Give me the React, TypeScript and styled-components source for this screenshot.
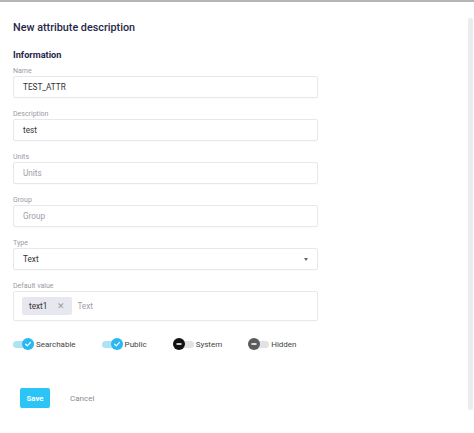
import { FC } from 'react';
import styled, { createGlobalStyle } from 'styled-components';

const GlobalStyle = createGlobalStyle`
  html, body {
    margin: 0;
    padding: 0;
    background: #fff;
    font-family: Roboto, 'Liberation Sans', sans-serif;
  }
`;

const Page = styled.div({
  position: 'relative',
  width: 474,
  height: 433,
  borderTop: '2px solid #b4b4b4',
  boxSizing: 'border-box',
  overflow: 'hidden',
});

const ScrollThumb = styled.div({
  position: 'absolute',
  right: 1,
  top: 16,
  width: 5,
  height: 392,
  borderRadius: 2,
  background: '#ececf0',
});

const Content = styled.div({
  padding: '19px 13px 0',
  width: 305,
});

const Title = styled.h1({
  margin: 0,
  fontSize: 10.8,
  lineHeight: '14px',
  fontWeight: 500,
  color: '#27274a',
});

const SectionTitle = styled.h2({
  margin: '14px 0 5px',
  fontSize: 9.2,
  lineHeight: '12px',
  fontWeight: 700,
  color: '#27274a',
});

const Field = styled.div({
  display: 'flex',
  flexDirection: 'column',
  marginBottom: 11,
});

const Label = styled.span({
  fontSize: 7,
  lineHeight: '10px',
  color: '#9a9aa2',
});

const Box = styled.div<{ $tall?: boolean }>(({ $tall }) => ({
  display: 'flex',
  alignItems: 'center',
  height: $tall ? 30 : 22,
  boxSizing: 'border-box',
  border: '1px solid #e8e8ec',
  borderRadius: 2,
  padding: $tall ? '0 8px' : '0 9px',
  gap: 5,
  fontSize: 8.2,
  color: '#333',
  boxShadow: '0 1px 1px rgba(0,0,0,0.02)',
}));

const Value = styled.span<{ $placeholder?: boolean }>(({ $placeholder }) => ({
  flex: 1,
  color: $placeholder ? '#9e9ea6' : '#333',
}));

const Caret = styled.span({
  width: 0,
  height: 0,
  borderLeft: '2.5px solid transparent',
  borderRight: '2.5px solid transparent',
  borderTop: '3px solid #666',
});

const Chip = styled.span({
  display: 'flex',
  alignItems: 'center',
  gap: 10,
  height: 18,
  padding: '0 7px',
  borderRadius: 2,
  background: '#e7e7ef',
  fontSize: 8.2,
  color: '#333',
});

const ChipClose = styled.span({
  fontSize: 9,
  color: '#9a9aa2',
  lineHeight: 1,
});

const Toggles = styled.div({
  display: 'flex',
  alignItems: 'center',
  gap: 26,
  height: 12,
  marginTop: 17,
});

const ToggleItem = styled.div({
  display: 'flex',
  alignItems: 'center',
  gap: 2,
  fontSize: 8,
  color: '#444',
});

const Track = styled.span<{ $on: boolean }>(({ $on }) => ({
  position: 'relative',
  display: 'inline-block',
  width: 21,
  height: 7,
  borderRadius: 4,
  background: $on ? '#aee2f7' : '#e2e2e6',
}));

const Knob = styled.span<{ $on: boolean; $color: string }>(({ $on, $color }) => ({
  position: 'absolute',
  top: -2.5,
  left: $on ? 9 : 0,
  width: 12,
  height: 12,
  borderRadius: '50%',
  background: $color,
  display: 'flex',
  alignItems: 'center',
  justifyContent: 'center',
}));

const Actions = styled.div({
  display: 'flex',
  alignItems: 'center',
  gap: 20,
  margin: '38px 0 0 7px',
});

const SaveButton = styled.button({
  width: 30,
  height: 20,
  border: 'none',
  borderRadius: 2,
  background: '#2ac4f6',
  color: '#fff',
  fontFamily: 'inherit',
  fontSize: 7.8,
  fontWeight: 700,
  padding: 0,
});

const CancelButton = styled.button({
  border: 'none',
  background: 'none',
  padding: 0,
  fontFamily: 'inherit',
  fontSize: 8,
  color: '#8a8a92',
});

const Toggle: FC<{ label: string; on: boolean; color: string }> = ({
  label,
  on,
  color,
}) => {
  return (
    <ToggleItem>
      <Track $on={on}>
        <Knob $on={on} $color={color}>
          {on ? (
            <svg width="8" height="8" viewBox="0 0 8 8">
              <path
                d="M1.6 4.2 L3.3 5.8 L6.5 2.4"
                fill="none"
                stroke="#fff"
                strokeWidth="1.2"
                strokeLinecap="round"
                strokeLinejoin="round"
              />
            </svg>
          ) : (
            <svg width="8" height="8" viewBox="0 0 8 8">
              <path d="M1.5 4 H6.5" stroke="#fff" strokeWidth="1.6" />
            </svg>
          )}
        </Knob>
      </Track>
      <span>{label}</span>
    </ToggleItem>
  );
};

const TextField: FC<{ label: string; value: string; placeholder?: boolean }> = ({
  label,
  value,
  placeholder,
}) => {
  return (
    <Field>
      <Label>{label}</Label>
      <Box>
        <Value $placeholder={placeholder}>{value}</Value>
      </Box>
    </Field>
  );
};

const App: FC = () => {
  return (
    <Page>
      <GlobalStyle />
      <Content>
        <Title>New attribute description</Title>
        <SectionTitle>Information</SectionTitle>
        <TextField label="Name" value="TEST_ATTR" />
        <TextField label="Description" value="test" />
        <TextField label="Units" value="Units" placeholder />
        <TextField label="Group" value="Group" placeholder />
        <Field>
          <Label>Type</Label>
          <Box>
            <Value>Text</Value>
            <Caret />
          </Box>
        </Field>
        <Field>
          <Label>Default value</Label>
          <Box $tall>
            <Chip>
              text1
              <ChipClose>✕</ChipClose>
            </Chip>
            <Value $placeholder>Text</Value>
          </Box>
        </Field>
        <Toggles>
          <Toggle label="Searchable" on color="#29b8f4" />
          <Toggle label="Public" on color="#29b8f4" />
          <Toggle label="System" on={false} color="#111" />
          <Toggle label="Hidden" on={false} color="#5c5c5c" />
        </Toggles>
        <Actions>
          <SaveButton>Save</SaveButton>
          <CancelButton>Cancel</CancelButton>
        </Actions>
      </Content>
      <ScrollThumb />
    </Page>
  );
};

export default App;
